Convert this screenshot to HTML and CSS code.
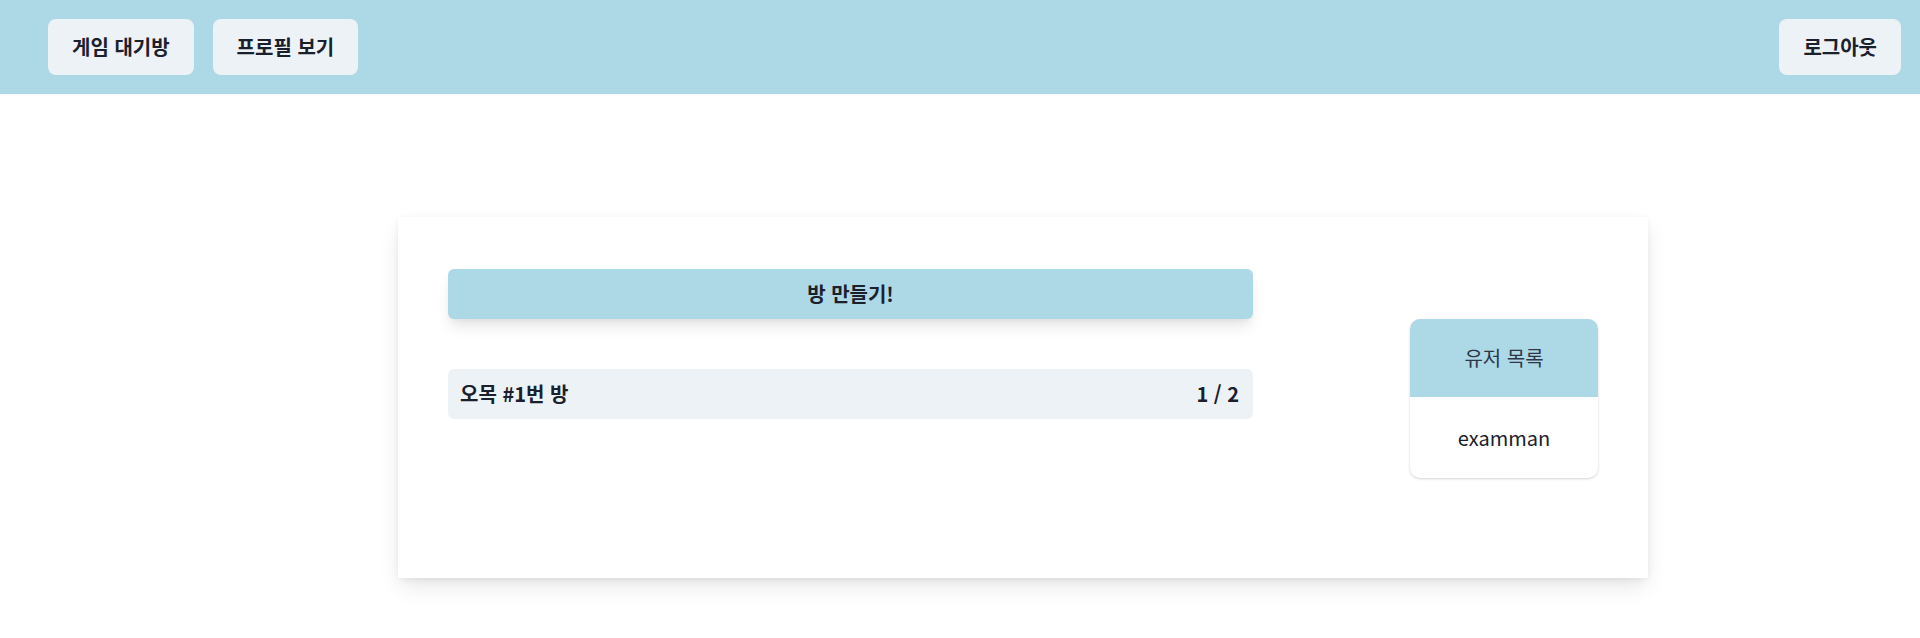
FILE: index.html
```html
<!DOCTYPE html>
<html lang="ko">
<head>
<meta charset="utf-8">
<title>게임 대기방</title>
<link rel="stylesheet" href="styles.css">
</head>
<body>
<header class="topbar">
  <nav class="nav-left">
    <button class="nav-btn">게임 대기방</button>
    <button class="nav-btn">프로필 보기</button>
  </nav>
  <button class="nav-btn">로그아웃</button>
</header>
<main class="main">
  <section class="lobby-card">
    <div class="rooms">
      <button class="create-btn">방 만들기!</button>
      <div class="room-row">
        <span class="room-name">오목 #1번 방</span>
        <span class="room-count">1 / 2</span>
      </div>
    </div>
    <aside class="user-box">
      <div class="user-head">유저 목록</div>
      <div class="user-item">examman</div>
    </aside>
  </section>
</main>
</body>
</html>
```

FILE: styles.css
```css
* { box-sizing: border-box; }
html, body { margin: 0; padding: 0; }
body {
  font-family: "Noto Sans CJK KR", "Noto Sans", sans-serif;
  color: #1a202c;
  background: #ffffff;
  width: 1920px;
  height: 638px;
  overflow: hidden;
}
.topbar {
  height: 94px;
  background: #add8e6;
  display: flex;
  align-items: center;
  justify-content: space-between;
  padding: 0 19px 0 48px;
}
.nav-left { display: flex; gap: 19px; }
.nav-btn {
  font-family: inherit;
  font-size: 20px;
  font-weight: 700;
  line-height: 28px;
  color: #1a202c;
  background: #edf2f7;
  border: none;
  border-radius: 8px;
  padding: 14px 24px;
  height: 56px;
  margin: 0;
}
.main {
  padding-top: 123px;
  padding-left: 398px;
}
.lobby-card {
  width: 1250px;
  height: 361px;
  background: #fff;
  padding: 52px 50px;
  display: flex;
  justify-content: space-between;
  box-shadow: 0 10px 22px -3px rgba(0,0,0,0.11), 0 4px 8px -2px rgba(0,0,0,0.05), 0 0 6px rgba(0,0,0,0.03);
}
.rooms {
  width: 805px;
  display: flex;
  flex-direction: column;
  gap: 50px;
}
.create-btn {
  font-family: inherit;
  font-size: 20px;
  font-weight: 700;
  line-height: 28px;
  color: #1a202c;
  background: #add8e6;
  border: none;
  border-radius: 6px;
  height: 50px;
  padding: 11px 12px;
  width: 100%;
  box-shadow: 0 10px 15px -3px rgba(0,0,0,0.1), 0 4px 6px -2px rgba(0,0,0,0.05);
}
.room-row {
  height: 50px;
  background: #edf2f7;
  border-radius: 6px;
  padding: 11px 14px 11px 12px;
  display: flex;
  justify-content: space-between;
  align-items: center;
  font-size: 20px;
  font-weight: 700;
  line-height: 28px;
}
.user-box {
  align-self: center;
  margin-top: 2px;
  width: 188px;
  border-radius: 10px;
  overflow: hidden;
  background: #fff;
  box-shadow: 0 1px 3px rgba(0,0,0,0.12), 0 1px 2px rgba(0,0,0,0.06);
}
.user-head {
  background: #add8e6;
  height: 78px;
  display: flex;
  align-items: center;
  justify-content: center;
  font-size: 20px;
  line-height: 28px;
  color: #2d3748;
}
.user-item {
  height: 81px;
  display: flex;
  align-items: center;
  justify-content: center;
  font-size: 20px;
  line-height: 28px;
  color: #1a202c;
}
```
